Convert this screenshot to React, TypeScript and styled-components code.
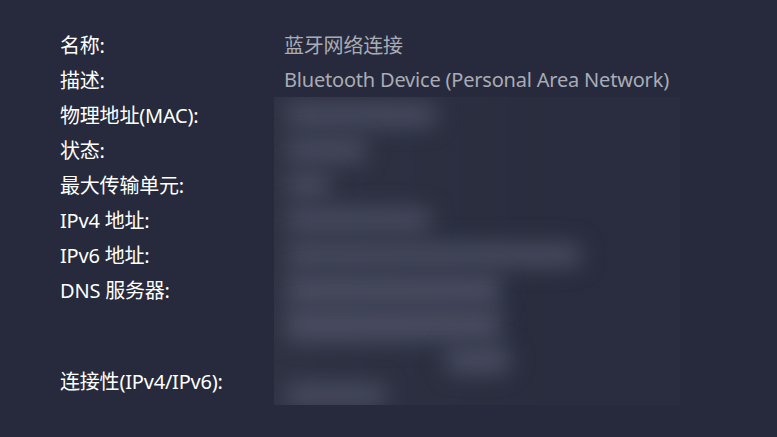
import React from 'react'
import styled, { createGlobalStyle } from 'styled-components'

const GlobalStyle = createGlobalStyle`
  html, body {
    margin: 0;
    padding: 0;
    background: #262a3c;
  }
  body {
    font-family: 'Noto Sans', 'Noto Sans CJK SC', sans-serif;
    -webkit-font-smoothing: antialiased;
  }
`

const Page = styled.div`
  width: 777px;
  height: 437px;
  overflow: hidden;
  background: #262a3c;
  box-sizing: border-box;
  padding: 27px 0 0 60px;
`

const Sheet = styled.div`
  display: grid;
  grid-template-columns: 224px 396px;
  grid-template-rows: repeat(7, 35px) 91px 35px;
`

const Label = styled.div<{ $row: number }>`
  grid-column: 1;
  grid-row: ${(p) => p.$row};
  height: 35px;
  display: flex;
  align-items: center;
  color: #ffffff;
  font-size: 20px;
  letter-spacing: -0.2px;
  white-space: nowrap;
`

const Value = styled.div<{ $row: number }>`
  grid-column: 2;
  grid-row: ${(p) => p.$row};
  height: 35px;
  display: flex;
  align-items: center;
  color: #a9acb6;
  font-size: 20px;
  letter-spacing: -0.2px;
  white-space: nowrap;
`

// hidden values: a soft panel with smudged lines instead of readable text
const Masked = styled.div`
  grid-column: 2;
  grid-row: 3 / 10;
  margin: 0 0 -7px -10px;
  position: relative;
  overflow: hidden;
  background: linear-gradient(90deg, rgba(255, 255, 255, 0.04), rgba(255, 255, 255, 0.012) 70%);
  display: flex;
  flex-direction: column;
  padding: 0 0 0 12px;
`

const Smudge = styled.div<{ $w: number; $x: number; $h: number }>`
  height: 35px;
  flex: none;
  display: flex;
  align-items: center;
  &::before {
    content: '';
    display: block;
    margin-left: ${(p) => p.$x}px;
    width: ${(p) => p.$w}px;
    height: ${(p) => p.$h}px;
    border-radius: 8px;
    background: #4a4d61;
    filter: blur(11px);
  }
`

const smudges = [
  { w: 150, x: 0, h: 22 },
  { w: 80, x: 0, h: 22 },
  { w: 44, x: 0, h: 22 },
  { w: 145, x: 0, h: 22 },
  { w: 295, x: 0, h: 22 },
  { w: 215, x: 0, h: 30 },
  { w: 215, x: 0, h: 32 },
  { w: 64, x: 160, h: 26 },
  { w: 100, x: 0, h: 22 },
]

const rows: { label: string; value?: string }[] = [
  { label: '名称:', value: '蓝牙网络连接' },
  { label: '描述:', value: 'Bluetooth Device (Personal Area Network)' },
  { label: '物理地址(MAC):' },
  { label: '状态:' },
  { label: '最大传输单元:' },
  { label: 'IPv4 地址:' },
  { label: 'IPv6 地址:' },
  { label: 'DNS 服务器:' },
  { label: '连接性(IPv4/IPv6):' },
]

export default function App() {
  return (
    <Page>
      <GlobalStyle />
      <Sheet>
        {rows.map((r, i) => (
          <React.Fragment key={r.label}>
            <Label $row={i + 1}>{r.label}</Label>
            {r.value && <Value $row={i + 1}>{r.value}</Value>}
          </React.Fragment>
        ))}
        <Masked>
          {smudges.map((s, i) => (
            <Smudge key={i} $w={s.w} $x={s.x} $h={s.h} />
          ))}
        </Masked>
      </Sheet>
    </Page>
  )
}
